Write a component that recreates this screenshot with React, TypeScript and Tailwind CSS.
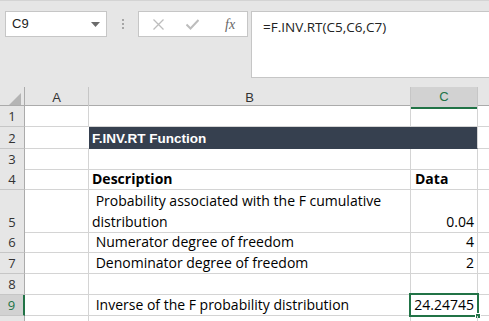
import React from 'react';

const cellFont = { fontFamily: '"Open Sans", "Liberation Sans", sans-serif' };
const headFont = { fontFamily: '"Liberation Sans", Arial, sans-serif' };

type Row = {
  n: number;
  h: string;
  b?: React.ReactNode;
  c?: React.ReactNode;
  dark?: boolean;
  selected?: boolean;
  hideNum?: boolean;
};

const rows: Row[] = [
  { n: 1, h: 'h-[21px]' },
  {
    n: 2,
    h: 'h-[22px]',
    dark: true,
    b: (
      <span className="font-bold text-white text-[13.5px] pl-[3px] leading-[19px]" style={headFont}>
        F.INV.RT Function
      </span>
    ),
  },
  { n: 3, h: 'h-[20px]' },
  { n: 4, h: 'h-[21px]', b: <span className="font-bold pl-[3px]">Description</span>, c: <span className="font-bold pl-[4px] w-full">Data</span> },
  {
    n: 5,
    h: 'h-[42px]',
    b: (
      <span className="pl-[3px] leading-[21px]">
        &nbsp;Probability associated with the F cumulative
        <br />
        distribution
      </span>
    ),
    c: <span className="w-full text-right pr-[3px]">0.04</span>,
  },
  { n: 6, h: 'h-[21px]', b: <span className="pl-[3px]">&nbsp;Numerator degree of freedom</span>, c: <span className="w-full text-right pr-[3px]">4</span> },
  { n: 7, h: 'h-[21px]', b: <span className="pl-[3px]">&nbsp;Denominator degree of freedom</span>, c: <span className="w-full text-right pr-[3px]">2</span> },
  { n: 8, h: 'h-[21px]' },
  { n: 9, h: 'h-[21px]', selected: true, b: <span className="pl-[3px]">&nbsp;Inverse of the F probability distribution</span>, c: <span className="w-full text-right pr-[3px]">24.24745</span> },
  { n: 10, h: 'h-[21px]', hideNum: true },
];

const App = () => {
  return (
    <div className="w-[489px] h-[321px] overflow-hidden bg-white text-[14px] text-black" style={cellFont}>
      {/* formula bar */}
      <div className="h-[87px] bg-[#e6e6e6] border-t border-[#d4d4d4] flex items-start pt-[10px] pl-[5px]" style={headFont}>
        <div className="w-[102px] h-[26px] bg-white border border-[#c6c6c6] flex items-center justify-between pl-[6px] pr-[6px]">
          <span className="text-[13px] text-[#222]">C9</span>
          <svg width="9" height="5" viewBox="0 0 9 5">
            <path d="M0 0h9L4.5 5z" fill="#6b6b6b" />
          </svg>
        </div>
        <div className="w-[31px] h-[26px] flex flex-col items-center justify-center gap-[2px]">
          <span className="w-[2px] h-[2px] bg-[#a6a6a6]" />
          <span className="w-[2px] h-[2px] bg-[#a6a6a6]" />
          <span className="w-[2px] h-[2px] bg-[#a6a6a6]" />
        </div>
        <div className="w-[110px] h-[26px] bg-white border border-[#c6c6c6] flex items-center pl-[14px] gap-[22px]">
          <svg width="11" height="11" viewBox="0 0 11 11">
            <path d="M0.5 0.5l10 10M10.5 0.5l-10 10" stroke="#bdbdbd" strokeWidth="1.3" />
          </svg>
          <svg width="13" height="11" viewBox="0 0 13 11">
            <path d="M0.5 5.5l4 4L12.5 1" stroke="#bdbdbd" strokeWidth="2" fill="none" />
          </svg>
          <span className="text-[14px] italic text-[#666] ml-[4px]" style={{ fontFamily: '"Liberation Serif", serif' }}>
            fx
          </span>
        </div>
        <div className="ml-[3px] flex-1 h-[67px] bg-white border border-[#c6c6c6] border-r-0 pl-[11px] pt-[5px]">
          <span className="text-[13.5px] text-[#222]" style={{ fontFamily: '"Open Sans", sans-serif' }}>
            =F.INV.RT(C5,C6,C7)
          </span>
        </div>
      </div>

      {/* column headers */}
      <div
        className="grid grid-cols-[25px_64px_322px_67px_11px] h-[19px] bg-[#e6e6e6] border-b border-[#ababab] text-[13px] text-[#333]"
        style={headFont}
      >
        <div className="relative border-r border-[#ababab]">
          <svg className="absolute right-[3px] bottom-[3px]" width="12" height="12" viewBox="0 0 12 12">
            <path d="M12 0v12H0z" fill="#b4b4b4" />
          </svg>
        </div>
        <div className="border-r border-[#c6c6c6] flex items-center justify-center">A</div>
        <div className="border-r border-[#c6c6c6] flex items-center justify-center">B</div>
        <div className="bg-[#d2d2d2] border-r border-[#c6c6c6] border-b-2 border-b-[#217346] flex items-center justify-center text-[#217346] -mb-px">
          C
        </div>
        <div />
      </div>

      {/* rows */}
      {rows.map((r) => (
        <div key={r.n} className={`grid grid-cols-[25px_64px_322px_67px_11px] ${r.h}`}>
          <div
            className={`border-b border-[#c6c6c6] flex items-end justify-center text-[13px] leading-[20px] ${
              r.selected ? 'bg-[#d2d2d2] text-[#217346] border-r-2 border-r-[#217346]' : 'bg-[#e6e6e6] text-[#333] border-r border-r-[#ababab]'
            }`}
          >
            {r.hideNum ? null : r.n}
          </div>
          <div className={`border-b border-r border-[#d4d4d4] ${r.dark ? 'border-r-0' : ''}`} />
          <div
            className={`border-b border-r flex items-end overflow-visible whitespace-nowrap leading-[20px] ${
              r.dark ? 'bg-[#36404f] border-[#36404f]' : 'border-[#d4d4d4]'
            }`}
          >
            {r.b}
          </div>
          <div
            className={`relative border-b border-r flex items-end leading-[20px] ${
              r.dark ? 'bg-[#36404f] border-b-[#36404f] border-r-[#d4d4d4]' : 'border-[#d4d4d4]'
            }`}
          >
            {r.c}
            {r.selected && (
              <>
                <div className="absolute -left-[2px] -top-[2px] -right-[2px] -bottom-[2px] border-2 border-[#217346]" />
                <div className="absolute -right-[4px] -bottom-[4px] w-[6px] h-[6px] bg-[#217346] border border-white" />
              </>
            )}
          </div>
          <div className="border-b border-[#d4d4d4]" />
        </div>
      ))}
    </div>
  );
};

export default App;
